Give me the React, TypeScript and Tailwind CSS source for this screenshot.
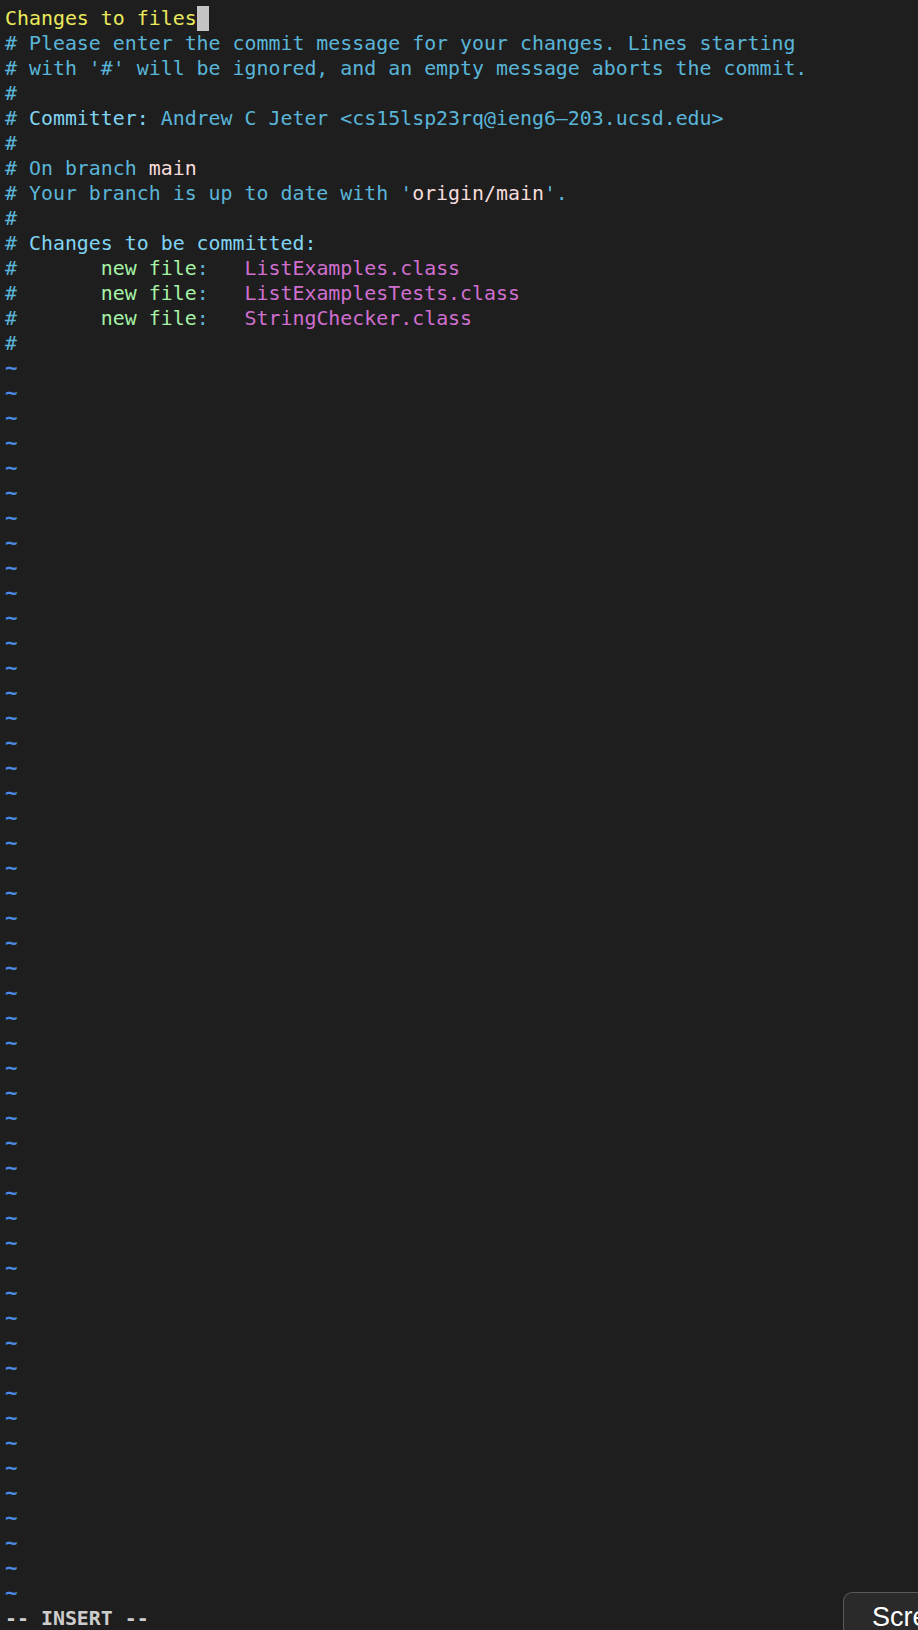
import React from 'react';

const cyan = 'text-[#5ab5d8]';
const light = 'text-[#80d4f2]';
const pink = 'text-[#f6dcdc]';
const green = 'text-[#a6f2a6]';
const magenta = 'text-[#d06fd0]';

type Seg = [string, string];

const lines: Seg[][] = [
  [['# Please enter the commit message for your changes. Lines starting', cyan]],
  [["# with '#' will be ignored, and an empty message aborts the commit.", cyan]],
  [['#', cyan]],
  [['# ', cyan], ['Committer:', light], [' Andrew C Jeter <cs15lsp23rq@ieng6\u2013203.ucsd.edu>', cyan]],
  [['#', cyan]],
  [['# On branch ', cyan], ['main', pink]],
  [["# Your branch is up to date with '", cyan], ['origin/main', pink], ["'.", cyan]],
  [['#', cyan]],
  [['# ', cyan], ['Changes to be committed:', light]],
  [['#       ', cyan], ['new file', green], [':   ', cyan], ['ListExamples.class', magenta]],
  [['#       ', cyan], ['new file', green], [':   ', cyan], ['ListExamplesTests.class', magenta]],
  [['#       ', cyan], ['new file', green], [':   ', cyan], ['StringChecker.class', magenta]],
  [['#', cyan]],
];

export default function App() {
  const tildes = Array.from({ length: 50 });

  return (
    <div className="relative h-[1630px] w-[918px] overflow-hidden bg-[#1e1e1e] pt-[6px] pl-[5px] font-['DejaVu_Sans_Mono','Liberation_Mono',monospace] text-[19.9px] leading-[25px] whitespace-pre">
      {/* first line with cursor */}
      <div className="flex h-[25px]">
        <span className="text-[#eaea5c]">Changes to files</span>
        <span className="inline-block h-[25px] w-[12px] bg-[#c4c4c4]" />
      </div>

      {lines.map((segs, i) => (
        <div key={i} className="h-[25px]">
          {segs.map(([t, c], j) => (
            <span key={j} className={c}>{t}</span>
          ))}
        </div>
      ))}

      {tildes.map((_, i) => (
        <div key={i} className="h-[25px] font-bold text-[21px] text-[#4a8ae2]">~</div>
      ))}

      <div className="h-[25px] font-bold text-[#cdcdcd]">-- INSERT --</div>

      {/* macOS screenshot thumbnail peeking in */}
      <div className="absolute left-[843px] top-[1592px] h-[80px] w-[75px] overflow-hidden rounded-l-[9px] border-y border-l border-[#5a5a5a] bg-[#2a2a2b] pl-[28px] pt-[6px] font-['Liberation_Sans',sans-serif] text-[27px] leading-[36px] text-white">
        Scre
      </div>
    </div>
  );
}
